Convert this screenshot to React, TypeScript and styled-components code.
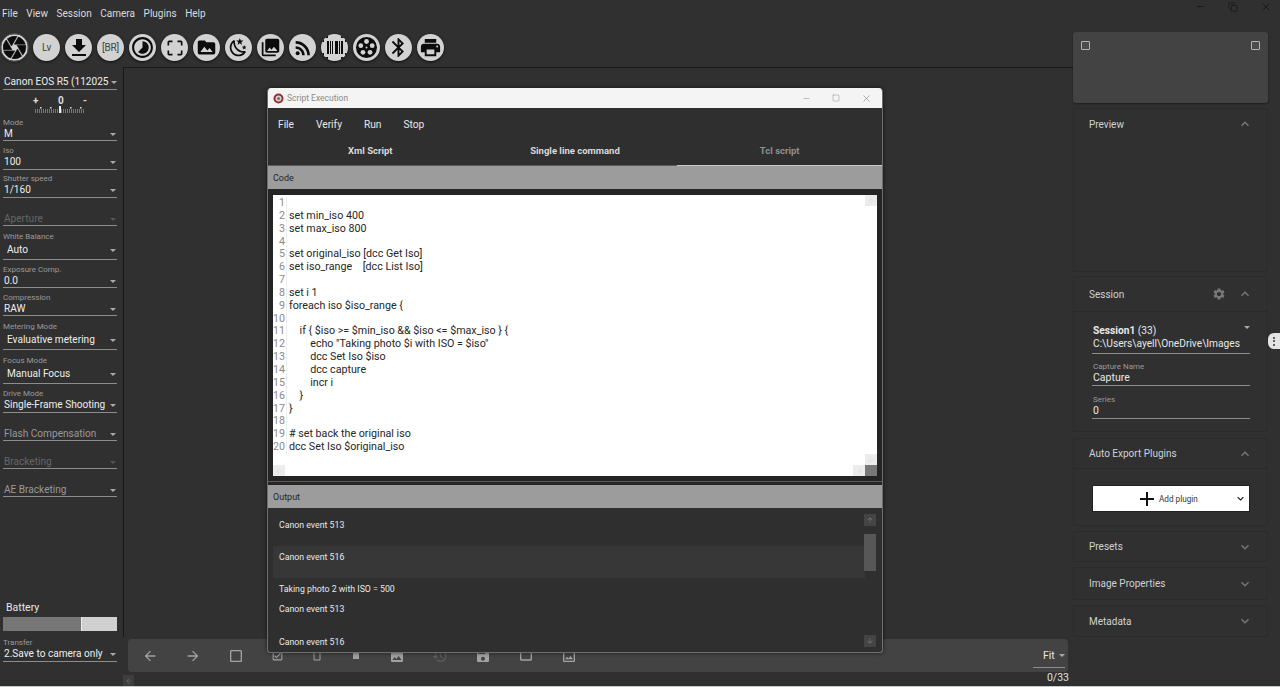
import styled, { createGlobalStyle } from 'styled-components';
import {
  MdArrowBack,
  MdArrowForward,
  MdBluetooth,
  MdCamera,
  MdCheckBoxOutlineBlank,
  MdCropFree,
  MdExpandLess,
  MdExpandMore,
  MdFileDownload,
  MdHistory,
  MdImage,
  MdKeyboardArrowDown,
  MdOutlineCheckBox,
  MdOutlineCropPortrait,
  MdPhotoLibrary,
  MdPrint,
  MdRssFeed,
  MdSave,
  MdSettings,
  MdStop,
  MdTimelapse,
  MdAdd,
  MdArrowUpward,
  MdArrowDownward,
  MdOutlineImage,
  MdCropLandscape,
} from 'react-icons/md';
import { Copy, Minus, Square, X } from 'lucide-react';

const GlobalStyle = createGlobalStyle`
  html, body {
    margin: 0;
    padding: 0;
    background: #303030;
  }
  * {
    box-sizing: border-box;
  }
`;

const Root = styled.div`
  position: relative;
  width: 1280px;
  height: 687px;
  display: flex;
  flex-direction: column;
  overflow: hidden;
  background: #303030;
  border-bottom: 1px solid #c4c8cc;
  color: #e6e6e6;
  font-family: Roboto, 'Liberation Sans', sans-serif;
`;

const MenuBar = styled.div`
  height: 26px;
  flex: none;
  display: flex;
  align-items: center;
  gap: 8.6px;
  padding-left: 2px;
  font-size: 10px;
  color: #dcdcdc;
`;

const WindowControls = styled.div`
  margin-left: auto;
  display: flex;
  align-self: flex-start;
  gap: 22px;
  padding: 0 8px 0 0;
  height: 13px;
  align-items: center;
  color: #111;
`;

const Body = styled.div`
  flex: 1;
  min-height: 0;
  display: flex;
`;

const Workspace = styled.div`
  flex: 1;
  min-width: 0;
  display: flex;
  flex-direction: column;
`;

const Toolbar = styled.div`
  height: 41px;
  flex: none;
  display: flex;
  align-items: flex-start;
  padding: 8px 0 0 1px;
  gap: 5px;
`;

const ToolButton = styled.div<{ $ring?: boolean }>`
  width: 27px;
  height: 27px;
  flex: none;
  border-radius: 50%;
  display: flex;
  align-items: center;
  justify-content: center;
  background: #d2d2d2;
  color: #0c0c0c;
  font-size: 10px;
  box-shadow: 0 1px 3px rgba(0, 0, 0, 0.7);
  outline: ${(p) => (p.$ring ? '1px solid #555' : 'none')};
  overflow: hidden;
`;

const ToolText = styled.span`
  color: #444;
  letter-spacing: -0.2px;
`;

const Main = styled.div`
  flex: 1;
  min-height: 0;
  display: flex;
`;

const LeftPanel = styled.div`
  width: 123px;
  flex: none;
  display: flex;
  flex-direction: column;
  padding: 0 6px 24px 3px;
`;

const Field = styled.div<{ $h: number }>`
  height: ${(p) => p.$h}px;
  flex: none;
  display: flex;
  flex-direction: column;
  justify-content: flex-end;
  border-bottom: 1px solid #8c8c8c;
`;

const FieldLabel = styled.div`
  font-size: 8px;
  line-height: 9px;
  color: #9a9a9a;
  margin-bottom: 1px;
  white-space: nowrap;
`;

const FieldValue = styled.div<{ $indent?: boolean; $tone?: string; $tall?: boolean; $lift?: boolean }>`
  display: flex;
  align-items: center;
  justify-content: space-between;
  font-size: 10.1px;
  line-height: 12px;
  white-space: nowrap;
  padding-left: ${(p) => (p.$indent ? '4px' : '1px')};
  padding-right: 1px;
  padding-top: ${(p) => (p.$tall ? '2.5px' : '0')};
  padding-bottom: ${(p) => (p.$tall ? '3px' : p.$lift ? '1px' : '0')};
  color: ${(p) => p.$tone || '#ededed'};
`;

const Caret = styled.span<{ $tone?: string }>`
  width: 0;
  height: 0;
  flex: none;
  margin-left: 2px;
  border-left: 3px solid transparent;
  border-right: 3px solid transparent;
  border-top: 3px solid ${(p) => p.$tone || '#aaa'};
`;

const EvScale = styled.div`
  height: 23px;
  flex: none;
  display: flex;
  flex-direction: column;
  align-items: center;
  padding-top: 6px;
`;

const EvMarks = styled.div`
  width: 54px;
  height: 6px;
  display: flex;
  justify-content: space-between;
  font-size: 10px;
  font-weight: 700;
  line-height: 9px;
  color: #ddd;
`;

const BatteryBlock = styled.div`
  margin-top: auto;
  display: flex;
  flex-direction: column;
`;

const BatteryLabel = styled.div`
  font-size: 10.5px;
  line-height: 12px;
  padding-left: 3px;
  margin-bottom: 3px;
`;

const BatteryBar = styled.div`
  height: 14px;
  display: flex;
  background: #d0d0d0;
`;

const BatteryFill = styled.div<{ $pct: number }>`
  width: ${(p) => p.$pct}%;
  background: #767676;
  border-right: 1px solid #eee;
`;

const Center = styled.div`
  flex: 1;
  min-width: 0;
  display: flex;
  flex-direction: column;
`;

const Stage = styled.div`
  flex: 1;
  border-left: 1px solid #181818;
  border-top: 1px solid #181818;
`;

const BottomBar = styled.div`
  height: 33px;
  flex: none;
  margin: 2px 5px 0;
  padding-left: 14px;
  display: flex;
  align-items: center;
  justify-content: space-between;
  background: #434343;
  border-radius: 4px;
  color: #a2a2a2;
`;

const BottomIcons = styled.div`
  display: flex;
  align-items: center;
  gap: 27px;
`;

const DimIcon = styled.span`
  display: flex;
  color: #5e5e5e;
`;

const FitSelect = styled.div`
  width: 32px;
  height: 24px;
  margin-right: 3px;
  padding-left: 10px;
  display: flex;
  align-items: center;
  justify-content: space-between;
  border-bottom: 1px solid #8c8c8c;
  font-size: 10.5px;
  color: #e6e6e6;
`;

const StatusRow = styled.div`
  height: 14px;
  flex: none;
  display: flex;
  align-items: flex-start;
  justify-content: space-between;
  padding-right: 4px;
  font-size: 10.5px;
  line-height: 11px;
  color: #e0e0e0;
`;

const ScrollArrow = styled.div`
  width: 11px;
  height: 11px;
  margin-top: 3px;
  display: flex;
  align-items: center;
  justify-content: center;
  background: #3e3e3e;
  color: #666;
`;

const RightPanel = styled.div`
  position: relative;
  width: 207px;
  flex: none;
  padding: 6px 12px 0 0;
  display: flex;
  flex-direction: column;
`;

const ThumbCard = styled.div`
  height: 71px;
  flex: none;
  display: flex;
  justify-content: space-between;
  align-items: flex-start;
  padding: 9px 8px;
  background: #434343;
  border-radius: 3px;
  box-shadow: 0 1px 2px rgba(0, 0, 0, 0.4);
`;

const ThumbCheck = styled.div`
  width: 9px;
  height: 9px;
  background: #4c4c4c;
  border: 1px solid #b4b4b4;
  border-radius: 1px;
`;

const Card = styled.div<{ $h: number; $gap: number }>`
  height: ${(p) => p.$h}px;
  margin-top: ${(p) => p.$gap}px;
  flex: none;
  border: 1px solid #2b2b2b;
  border-radius: 2px;
`;

const CardHeader = styled.div<{ $h?: number; $rule?: boolean }>`
  height: ${(p) => p.$h || 30}px;
  display: flex;
  align-items: center;
  gap: 11px;
  padding: 0 14px 0 15px;
  font-size: 10px;
  color: #cfd2d4;
  border-bottom: ${(p) => (p.$rule ? '1px solid #2a2a2a' : 'none')};
`;

const CardTitle = styled.span`
  margin-right: auto;
`;

const Chevron = styled.span`
  display: flex;
  color: #787878;
`;

const SessionBody = styled.div`
  padding: 12px 17px 0 18px;
  display: flex;
  flex-direction: column;
`;

const SessionSelect = styled.div`
  height: 30px;
  display: flex;
  justify-content: space-between;
  border-bottom: 1px solid #8c8c8c;
  font-size: 10.2px;
  line-height: 13px;
  color: #e8e8e8;
`;

const SessionText = styled.div`
  white-space: nowrap;
  padding-left: 1px;
`;

const SessionName = styled.b`
  font-weight: 700;
`;

const SessionCaret = styled.div`
  padding-top: 4px;
  padding-right: 0;
`;

const TextField = styled.div<{ $h: number }>`
  height: ${(p) => p.$h}px;
  display: flex;
  flex-direction: column;
  justify-content: flex-end;
  padding-left: 1px;
  padding-bottom: 1.5px;
  border-bottom: 1px solid #8c8c8c;
  font-size: 10.5px;
  line-height: 12px;
  color: #e8e8e8;
`;

const AddPlugin = styled.div`
  height: 27px;
  margin: 16px 17px 0 18px;
  padding: 0 2px 0 42px;
  display: flex;
  align-items: center;
  background: #fff;
  border: 1px solid #222;
  font-size: 8.2px;
  color: #333;
`;

const AddPluginLabel = styled.span`
  margin: 0 auto 0 0;
`;

const Kebab = styled.div`
  position: absolute;
  right: 0;
  top: 307px;
  width: 12px;
  height: 16px;
  display: flex;
  flex-direction: column;
  align-items: center;
  justify-content: center;
  gap: 1.5px;
  background: #e4e4e4;
  border-radius: 6px 0 0 6px;
`;

const KebabDot = styled.span`
  width: 2px;
  height: 2px;
  border-radius: 50%;
  background: #333;
`;

const ScriptWindow = styled.div`
  position: absolute;
  left: 267px;
  top: 88px;
  width: 616px;
  height: 565px;
  display: flex;
  flex-direction: column;
  background: #2f2f2f;
  border: 1px solid #6e6e6e;
  border-top: none;
  border-radius: 4px 4px 3px 3px;
  box-shadow: 0 0 4px rgba(0, 0, 0, 0.6);
  overflow: hidden;
`;

const TitleBar = styled.div`
  height: 20px;
  flex: none;
  display: flex;
  align-items: center;
  padding: 0 10px 0 5px;
  background: #f4f4f4;
  font-size: 8.5px;
  color: #8a8a8a;
`;

const TitleText = styled.span`
  margin: 0 auto 0 3px;
`;

const TitleControls = styled.div`
  display: flex;
  align-items: center;
  gap: 21px;
  color: #777;
`;

const WindowMenu = styled.div`
  height: 32px;
  flex: none;
  display: flex;
  align-items: center;
  gap: 22px;
  padding-left: 10px;
  font-size: 10.2px;
  color: #e8e8e8;
`;

const Tabs = styled.div`
  height: 26px;
  flex: none;
  display: flex;
`;

const Tab = styled.div<{ $active?: boolean }>`
  flex: 1;
  display: flex;
  align-items: center;
  justify-content: center;
  padding-bottom: 5px;
  font-size: 9.5px;
  font-weight: 700;
  color: ${(p) => (p.$active ? '#8f8f8f' : '#dadada')};
  border-bottom: 1px solid ${(p) => (p.$active ? '#c8c8c8' : '#5a5a5a')};
`;

const SectionHeader = styled.div<{ $h: number }>`
  height: ${(p) => p.$h}px;
  flex: none;
  display: flex;
  align-items: center;
  padding-left: 5px;
  background: #9c9c9c;
  font-size: 9px;
  color: #262626;
`;

const EditorFrame = styled.div`
  height: 293px;
  flex: none;
  padding: 6px 5px 5px 5px;
  background: #242424;
  border-bottom: 1px solid #5a5a5a;
`;

const Editor = styled.div`
  position: relative;
  height: 100%;
  padding-top: 2px;
  background: #fff;
  overflow: hidden;
`;

const CodeLine = styled.div`
  display: flex;
  height: 12.85px;
  line-height: 12.85px;
  font-size: 10.7px;
  color: #262626;
  white-space: pre;
`;

const LineNumber = styled.span`
  width: 14px;
  flex: none;
  text-align: right;
  color: #8a8a8a;
  border-right: 1px solid #eee;
  padding-right: 1px;
  margin-right: 2px;
`;

const ScrollBox = styled.div<{ $corner: string; $dark?: boolean }>`
  position: absolute;
  width: 12px;
  height: 11px;
  ${(p) => p.$corner};
  display: flex;
  align-items: center;
  justify-content: center;
  background: ${(p) => (p.$dark ? '#787878' : '#ececec')};
`;

const GapBar = styled.div`
  height: 3px;
  flex: none;
  background: #262626;
`;

const OutputList = styled.div`
  position: relative;
  flex: 1;
  min-height: 0;
  padding: 6px 0 0 5px;
  overflow: hidden;
`;

const OutputRow = styled.div<{ $h: number; $hot?: boolean }>`
  height: ${(p) => p.$h}px;
  width: 592px;
  padding-left: 6px;
  font-size: 8.75px;
  line-height: 22px;
  color: #e8e8e8;
  background: ${(p) => (p.$hot ? '#373737' : 'transparent')};
`;

const OutputBox = styled.div<{ $top: number }>`
  position: absolute;
  right: 6px;
  top: ${(p) => p.$top}px;
  width: 12px;
  height: 12px;
  display: flex;
  align-items: center;
  justify-content: center;
  background: #444;
  color: #777;
`;

const OutputThumb = styled.div`
  position: absolute;
  right: 6px;
  top: 26px;
  width: 12px;
  height: 37px;
  background: #575757;
`;

const GLYPH = 21;

const FolderImage = () => (
  <svg width={GLYPH} height={GLYPH} viewBox="0 0 24 24" fill="currentColor">
    <path
      fillRule="evenodd"
      d="M5,17L9.5,11L13,15.5L15.5,12.5L19,17M20,6H12L10,4H4A2,2 0 0,0 2,6V18A2,2 0 0,0 4,20H20A2,2 0 0,0 22,18V8A2,2 0 0,0 20,6Z"
    />
  </svg>
);

const MoonStars = () => (
  <svg width={GLYPH} height={GLYPH} viewBox="0 0 24 24" fill="currentColor">
    <path d="M17.75,4.09L15.22,6.03L16.13,9.09L13.5,7.28L10.87,9.09L11.78,6.03L9.25,4.09L12.44,4L13.5,1L14.56,4L17.75,4.09M21.25,11L19.61,12.25L20.2,14.23L18.5,13.06L16.8,14.23L17.39,12.25L15.75,11L17.81,10.95L18.5,9L19.19,10.95L21.25,11M18.97,15.95C19.8,15.87 20.69,17.05 20.16,17.8C19.84,18.25 19.5,18.67 19.08,19.07C15.17,23 8.84,23 4.94,19.07C1.03,15.17 1.03,8.83 4.94,4.93C5.34,4.53 5.76,4.17 6.21,3.85C6.96,3.32 8.14,4.21 8.06,5.04C7.79,7.9 8.75,10.87 10.95,13.06C13.14,15.26 16.1,16.22 18.97,15.95M17.33,17.97C14.5,17.81 11.7,16.64 9.53,14.5C7.36,12.31 6.2,9.5 6.04,6.68C3.23,9.82 3.34,14.64 6.35,17.66C9.37,20.67 14.19,20.78 17.33,17.97Z" />
  </svg>
);

const Barcode = () => (
  <svg width={27} height={27} viewBox="0 0 27 27" fill="currentColor">
    <path d="M1 8h2V4h4V2H3a2 2 0 0 0-2 2zM26 8h-2V4h-4V2h4a2 2 0 0 1 2 2zM1 19h2v4h4v2H3a2 2 0 0 1-2-2zM26 19h-2v4h-4v2h4a2 2 0 0 0 2-2z" />
    {[6, 9, 11, 14, 16, 18, 20].map((x, i) => (
      <rect key={x} x={x} y={7} width={i % 3 === 0 ? 2 : 1} height={13} />
    ))}
  </svg>
);

const FilmReel = () => (
  <svg width={25} height={25} viewBox="0 0 25 25">
    <circle cx="12.5" cy="12.5" r="10.5" fill="currentColor" />
    <circle cx="12.5" cy="12.5" r="1" fill="#d2d2d2" />
    {[0, 72, 144, 216, 288].map((a) => (
      <circle
        key={a}
        cx={12.5 + 6 * Math.sin((a * Math.PI) / 180)}
        cy={12.5 - 6 * Math.cos((a * Math.PI) / 180)}
        r="2.4"
        fill="#d2d2d2"
      />
    ))}
  </svg>
);

const EvTicks = () => (
  <svg width={56} height={11} viewBox="0 0 56 11">
    {Array.from({ length: 25 }, (_, i) => i).map((i) => (
      <rect
        key={i}
        x={3 + i * 2}
        y={i === 12 ? 4 : 7}
        width={i === 12 ? 2 : 1}
        height={i === 12 ? 7 : 4}
        fill={i === 12 ? '#eee' : '#777'}
      />
    ))}
    {[8, 18, 38, 48].map((x) => (
      <rect key={x} x={x} y={5} width={1.5} height={1.5} fill="#ddd" />
    ))}
  </svg>
);

type SelectProps = {
  h: number;
  label?: string;
  value: string;
  indent?: boolean;
  tone?: string;
  tall?: boolean;
  lift?: boolean;
};

const fields: SelectProps[] = [
  { h: 28, label: 'Mode', value: 'M' },
  { h: 29, label: 'Iso', value: '100', lift: true },
  { h: 28, label: 'Shutter speed', value: '1/160', lift: true },
  { h: 28, value: 'Aperture', tone: '#666' },
  { h: 34, label: 'White Balance', value: 'Auto', indent: true, tall: true },
  { h: 28, label: 'Exposure Comp.', value: '0.0' },
  { h: 28, label: 'Compression', value: 'RAW' },
  { h: 34, label: 'Metering Mode', value: 'Evaluative metering', indent: true, tall: true },
  { h: 34, label: 'Focus Mode', value: 'Manual Focus', indent: true, tall: true },
  { h: 29, label: 'Drive Mode', value: 'Single-Frame Shooting', lift: true },
  { h: 28, value: 'Flash Compensation', tone: '#999' },
  { h: 28, value: 'Bracketing', tone: '#666' },
  { h: 28, value: 'AE Bracketing', tone: '#999' },
];

const SelectField = ({ h, label, value, indent, tone, tall, lift }: SelectProps) => (
  <Field $h={h}>
    {label && <FieldLabel>{label}</FieldLabel>}
    <FieldValue $indent={indent} $tone={tone} $tall={tall} $lift={lift}>
      {value}
      <Caret $tone={tone === '#666' ? '#555' : undefined} />
    </FieldValue>
  </Field>
);

const codeLines = [
  '',
  'set min_iso 400',
  'set max_iso 800',
  '',
  'set original_iso [dcc Get Iso]',
  'set iso_range    [dcc List Iso]',
  '',
  'set i 1',
  'foreach iso $iso_range {',
  '',
  '    if { $iso >= $min_iso && $iso <= $max_iso } {',
  '        echo "Taking photo $i with ISO = $iso"',
  '        dcc Set Iso $iso',
  '        dcc capture',
  '        incr i',
  '    }',
  '}',
  '',
  '# set back the original iso',
  'dcc Set Iso $original_iso',
];

const outputRows = [
  { text: 'Canon event 513', h: 32 },
  { text: 'Canon event 516', h: 32, hot: true },
  { text: 'Taking photo 2 with ISO = 500', h: 20 },
  { text: 'Canon event 513', h: 33 },
  { text: 'Canon event 516', h: 32 },
];

export default function App() {
  return (
    <>
      <GlobalStyle />
      <Root>
        <MenuBar>
          <span>File</span>
          <span>View</span>
          <span>Session</span>
          <span>Camera</span>
          <span>Plugins</span>
          <span>Help</span>
          <WindowControls>
            <Minus size={11} strokeWidth={1.5} />
            <Copy size={10} strokeWidth={1.5} />
            <X size={12} strokeWidth={1.5} />
          </WindowControls>
        </MenuBar>
        <Body>
          <Workspace>
            <Toolbar>
              <ToolButton $ring>
                <MdCamera size={27} stroke="currentColor" strokeWidth={0.6} />
              </ToolButton>
              <ToolButton>
                <ToolText>Lv</ToolText>
              </ToolButton>
              <ToolButton>
                <MdFileDownload size={24} />
              </ToolButton>
              <ToolButton>
                <ToolText>[BR]</ToolText>
              </ToolButton>
              <ToolButton>
                <MdTimelapse size={25} />
              </ToolButton>
              <ToolButton>
                <MdCropFree size={20} />
              </ToolButton>
              <ToolButton>
                <FolderImage />
              </ToolButton>
              <ToolButton>
                <MoonStars />
              </ToolButton>
              <ToolButton>
                <MdPhotoLibrary size={21} />
              </ToolButton>
              <ToolButton>
                <MdRssFeed size={22} />
              </ToolButton>
              <ToolButton>
                <Barcode />
              </ToolButton>
              <ToolButton>
                <FilmReel />
              </ToolButton>
              <ToolButton>
                <MdBluetooth size={23} />
              </ToolButton>
              <ToolButton>
                <MdPrint size={23} />
              </ToolButton>
            </Toolbar>
            <Main>
              <LeftPanel>
                <SelectField h={23} value="Canon EOS R5 (112025" lift />
                <EvScale>
                  <EvMarks>
                    <span>+</span>
                    <span>0</span>
                    <span>-</span>
                  </EvMarks>
                  <EvTicks />
                </EvScale>
                {fields.map((f) => (
                  <SelectField key={f.value} {...f} />
                ))}
                <BatteryBlock>
                  <BatteryLabel>Battery</BatteryLabel>
                  <BatteryBar>
                    <BatteryFill $pct={69} />
                  </BatteryBar>
                  <SelectField h={31} label="Transfer" value="2.Save to camera only" lift />
                </BatteryBlock>
              </LeftPanel>
              <Center>
                <Stage />
                <BottomBar>
                  <BottomIcons>
                    <MdArrowBack size={16} />
                    <MdArrowForward size={16} />
                    <MdCheckBoxOutlineBlank size={16} />
                    <MdOutlineCheckBox size={13} />
                    <MdOutlineCropPortrait size={12} />
                    <MdStop size={12} />
                    <MdImage size={16} />
                    <DimIcon>
                      <MdHistory size={16} />
                    </DimIcon>
                    <MdSave size={16} />
                    <MdCropLandscape size={16} />
                    <MdOutlineImage size={16} />
                  </BottomIcons>
                  <FitSelect>
                    Fit
                    <Caret />
                  </FitSelect>
                </BottomBar>
                <StatusRow>
                  <ScrollArrow>
                    <MdArrowBack size={8} />
                  </ScrollArrow>
                  0/33
                </StatusRow>
              </Center>
            </Main>
          </Workspace>
          <RightPanel>
            <ThumbCard>
              <ThumbCheck />
              <ThumbCheck />
            </ThumbCard>
            <Card $h={164} $gap={5}>
              <CardHeader>
                <CardTitle>Preview</CardTitle>
                <Chevron>
                  <MdExpandLess size={16} />
                </Chevron>
              </CardHeader>
            </Card>
            <Card $h={156} $gap={4}>
              <CardHeader $h={35} $rule>
                <CardTitle>Session</CardTitle>
                <Chevron>
                  <MdSettings size={14} />
                </Chevron>
                <Chevron>
                  <MdExpandLess size={16} />
                </Chevron>
              </CardHeader>
              <SessionBody>
                <SessionSelect>
                  <SessionText>
                    <SessionName>Session1</SessionName> (33)
                    <br />
                    C:\Users\ayell\OneDrive\Images
                  </SessionText>
                  <SessionCaret>
                    <Caret />
                  </SessionCaret>
                </SessionSelect>
                <TextField $h={32}>
                  <FieldLabel>Capture Name</FieldLabel>
                  Capture
                </TextField>
                <TextField $h={33}>
                  <FieldLabel>Series</FieldLabel>0
                </TextField>
              </SessionBody>
            </Card>
            <Card $h={88} $gap={6}>
              <CardHeader $h={30} $rule>
                <CardTitle>Auto Export Plugins</CardTitle>
                <Chevron>
                  <MdExpandLess size={16} />
                </Chevron>
              </CardHeader>
              <AddPlugin>
                <MdAdd size={24} color="#111" />
                <AddPluginLabel>Add plugin</AddPluginLabel>
                <MdKeyboardArrowDown size={13} color="#111" />
              </AddPlugin>
            </Card>
            {[
              { title: 'Presets', h: 31, gap: 5 },
              { title: 'Image Properties', h: 33, gap: 5 },
              { title: 'Metadata', h: 32, gap: 5 },
            ].map((c) => (
              <Card key={c.title} $h={c.h} $gap={c.gap}>
                <CardHeader $h={c.h - 2}>
                  <CardTitle>{c.title}</CardTitle>
                  <Chevron>
                    <MdExpandMore size={16} />
                  </Chevron>
                </CardHeader>
              </Card>
            ))}
            <Kebab>
              <KebabDot />
              <KebabDot />
              <KebabDot />
            </Kebab>
          </RightPanel>
        </Body>

        <ScriptWindow>
          <TitleBar>
            <svg width={11} height={11} viewBox="0 0 11 11">
              <circle cx="5.5" cy="5.5" r="5" fill="#9c2f32" />
              <circle cx="5.5" cy="5.5" r="3" fill="#d5d5d5" />
              <circle cx="5.5" cy="5.5" r="1.6" fill="#777" />
            </svg>
            <TitleText>Script Execution</TitleText>
            <TitleControls>
              <Minus size={9} strokeWidth={1.2} />
              <Square size={8} strokeWidth={1.2} />
              <X size={11} strokeWidth={1.2} />
            </TitleControls>
          </TitleBar>
          <WindowMenu>
            <span>File</span>
            <span>Verify</span>
            <span>Run</span>
            <span>Stop</span>
          </WindowMenu>
          <Tabs>
            <Tab>Xml Script</Tab>
            <Tab>Single line command</Tab>
            <Tab $active>Tcl script</Tab>
          </Tabs>
          <SectionHeader $h={23}>Code</SectionHeader>
          <EditorFrame>
            <Editor>
              {codeLines.map((line, i) => (
                <CodeLine key={i}>
                  <LineNumber>{i + 1}</LineNumber>
                  {line}
                </CodeLine>
              ))}
              <ScrollBox $corner="right: 0; top: 0;">
                <MdArrowUpward size={8} color="#ddd" />
              </ScrollBox>
              <ScrollBox $corner="right: 0; bottom: 11px;">
                <MdArrowDownward size={8} color="#ddd" />
              </ScrollBox>
              <ScrollBox $corner="left: 0; bottom: 0;">
                <MdArrowBack size={8} color="#ddd" />
              </ScrollBox>
              <ScrollBox $corner="right: 12px; bottom: 0;">
                <MdArrowForward size={8} color="#ddd" />
              </ScrollBox>
              <ScrollBox $corner="right: 0; bottom: 0;" $dark />
            </Editor>
          </EditorFrame>
          <GapBar />
          <SectionHeader $h={23}>Output</SectionHeader>
          <OutputList>
            {outputRows.map((r, i) => (
              <OutputRow key={i} $h={r.h} $hot={r.hot}>
                {r.text}
              </OutputRow>
            ))}
            <OutputBox $top={6}>
              <MdArrowUpward size={8} />
            </OutputBox>
            <OutputThumb />
            <OutputBox $top={127}>
              <MdArrowDownward size={8} />
            </OutputBox>
          </OutputList>
        </ScriptWindow>
      </Root>
    </>
  );
}
